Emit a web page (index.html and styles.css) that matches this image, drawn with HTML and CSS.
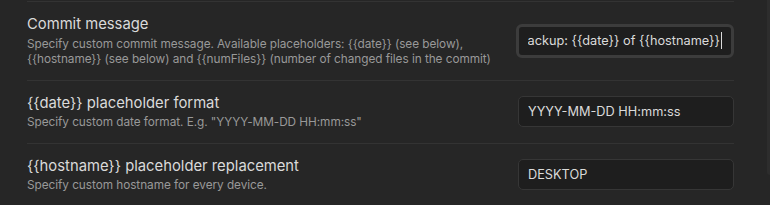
FILE: index.html
```html
<!DOCTYPE html>
<html>
<head>
<meta charset="utf-8">
<link rel="stylesheet" href="styles.css">
</head>
<body>
<div class="settings">
  <div class="setting-item">
    <div class="info">
      <div class="name">Commit message</div>
      <div class="desc">Specify custom commit message. Available placeholders: {{date}} (see below), {{hostname}} (see below) and {{numFiles}} (number of changed files in the commit)</div>
    </div>
    <div class="control">
      <div class="text-input focused"><span class="clip"><span class="scroll">vault backup: {{date}} of {{hostname}}<span class="caret"></span></span></span></div>
    </div>
  </div>
  <div class="setting-item">
    <div class="info">
      <div class="name">{{date}} placeholder format</div>
      <div class="desc">Specify custom date format. E.g. "YYYY-MM-DD HH:mm:ss"</div>
    </div>
    <div class="control">
      <input class="text-input" type="text" value="YYYY-MM-DD HH:mm:ss">
    </div>
  </div>
  <div class="setting-item">
    <div class="info">
      <div class="name">{{hostname}} placeholder replacement</div>
      <div class="desc">Specify custom hostname for every device.</div>
    </div>
    <div class="control">
      <input class="text-input" type="text" value="DESKTOP">
    </div>
  </div>
</div>
<div class="scrollbar"></div>
</body>
</html>
```
FILE: styles.css
```css
html, body {
  margin: 0;
  padding: 0;
  background: #262626;
  height: 100%;
  overflow: hidden;
}
body {
  font-family: Inter, "Noto Sans", sans-serif;
  color: #dadada;
}
.settings {
  margin-left: 27px;
  width: 707px;
  padding-top: 1px;
}
.setting-item {
  display: flex;
  align-items: center;
  border-top: 1px solid #333333;
  padding: 12px 0;
}
.info {
  flex: 1;
  min-width: 0;
  margin-right: 0;
}
.name {
  font-size: 14.8px;
  line-height: 20px;
  color: #dadada;
}
.desc {
  font-size: 11.8px;
  letter-spacing: -0.05px;
  line-height: 15.5px;
  color: #999999;
  padding-top: 2.5px;
}
.control {
  flex: none;
  display: flex;
  justify-content: flex-end;
}
.text-input {
  box-sizing: border-box;
  width: 216px;
  height: 31px;
  background: #1e1e1e;
  border: 1px solid #363636;
  border-radius: 5px;
  padding: 0 9px;
  font-family: Inter, "Noto Sans", sans-serif;
  font-size: 12.75px;
  color: #dadada;
  outline: none;
}
.text-input.focused {
  width: 218px;
  height: 34px;
  border: 3px solid #3c3c3c;
  border-radius: 6px;
  padding: 0 9px;
  display: flex;
  align-items: center;
}
.clip {
  flex: 1;
  display: flex;
  justify-content: flex-end;
  overflow: hidden;
  white-space: nowrap;
}
.scroll {
  display: inline-flex;
  align-items: center;
  flex: none;
}
.caret {
  display: inline-block;
  width: 1px;
  height: 17px;
  background: #dadada;
  margin-left: 1px;
}
.scrollbar {
  position: absolute;
  right: 0;
  top: 0;
  width: 3px;
  height: 175px;
  background: #2d2d2d;
  border-bottom-left-radius: 3px;
}
```
